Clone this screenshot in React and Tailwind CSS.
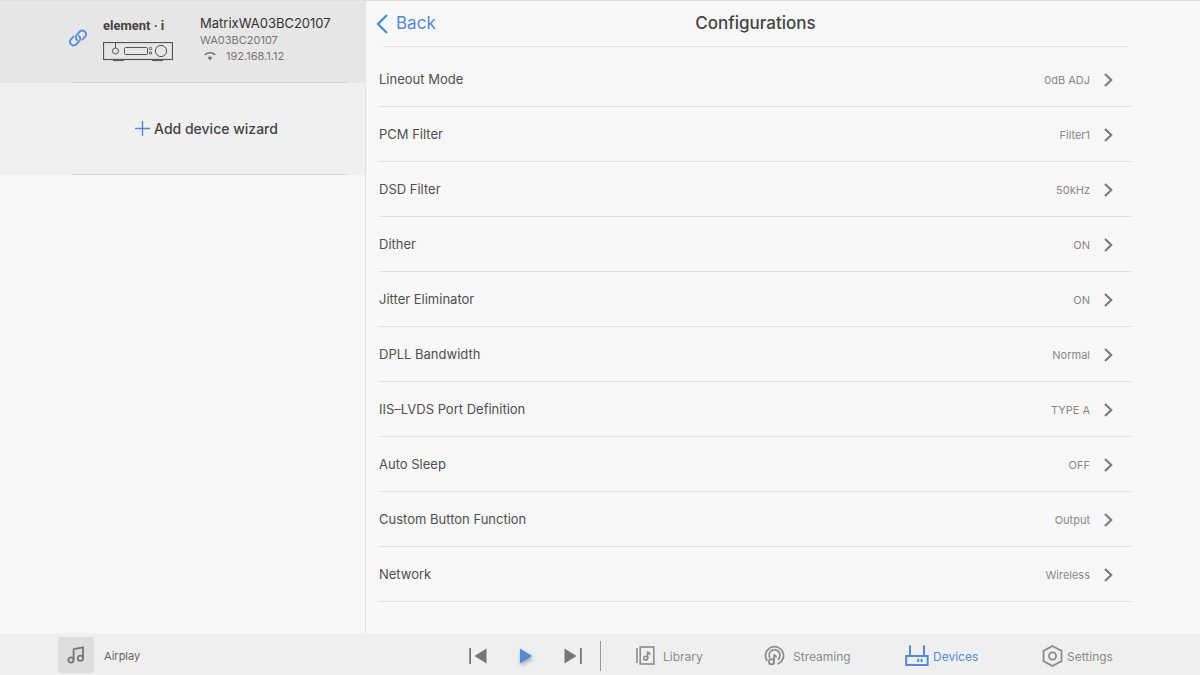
import { useState } from 'react';

const settings = [
  { label: 'Lineout Mode', value: '0dB ADJ' },
  { label: 'PCM Filter', value: 'Filter1' },
  { label: 'DSD Filter', value: '50kHz' },
  { label: 'Dither', value: 'ON' },
  { label: 'Jitter Eliminator', value: 'ON' },
  { label: 'DPLL Bandwidth', value: 'Normal' },
  { label: 'IIS–LVDS Port Definition', value: 'TYPE A' },
  { label: 'Auto Sleep', value: 'OFF' },
  { label: 'Custom Button Function', value: 'Output' },
  { label: 'Network', value: 'Wireless' },
];

const LinkIcon = () => (
  <svg width="20" height="20" viewBox="0 0 20 20" fill="none" stroke="#5f90de" strokeWidth="1.9" strokeLinecap="round">
    <path d="M9.2 12.2a3.7 3.7 0 0 1-.6-5.2l3.2-3.5a3.7 3.7 0 0 1 5.4 5l-2.6 2.9" />
    <path d="M10.800 7.800a3.700 3.700 0 0 1 .6 5.200l-3.200 3.500a3.700 3.700 0 0 1-5.400-5l2.600-2.900" />
  </svg>
);

const DeviceDrawing = () => (
  <svg width="70" height="20" viewBox="0 0 70 20" fill="none" stroke="#555" strokeWidth="1">
    <rect x="0.5" y="0.5" width="69" height="17" strokeWidth="1.2" />
    <path d="M12.5 1v5" />
    <circle cx="12.5" cy="9" r="3" />
    <rect x="21.5" y="5.500" width="23" height="7" rx="1" />
    <circle cx="47.5" cy="6.5" r="1.2" />
    <circle cx="47.5" cy="11" r="1.2" />
    <circle cx="58" cy="9" r="5.6" />
    <path d="M10 18.6h11M49 18.6h11" />
  </svg>
);

const WifiIcon = () => (
  <svg width="12" height="10" viewBox="0 0 12 10" fill="none" stroke="#777" strokeWidth="1.5">
    <path d="M.8 3.9a7.3 7.3 0 0 1 10.4 0" />
    <path d="M3.6 6.6a3.4 3.4 0 0 1 4.8 0L6 9.400z" fill="#777" stroke="none" />
  </svg>
);

const NoteIcon = () => (
  <svg width="18" height="18" viewBox="0 0 18 18" fill="none" stroke="#777" strokeWidth="1.8">
    <circle cx="4" cy="14" r="2.6" />
    <circle cx="13.4" cy="12.3" r="2.6" />
    <path d="M6.6 14V3.200L16 1.400v10.900" />
  </svg>
);

const LibraryIcon = () => (
  <svg width="19" height="19" viewBox="0 0 19 19" fill="none" stroke="currentColor" strokeWidth="1.6">
    <path d="M1 2v15" />
    <rect x="4.2" y="1" width="13.6" height="17" />
    <circle cx="9.700" cy="12.200" r="1.9" />
    <path d="M11.600 12.200V5.200M11.600 5.600c.3 1.700 2.200 1.200 2.400 3.200" />
  </svg>
);

const StreamingIcon = () => (
  <svg width="21" height="21" viewBox="0 0 21 21" fill="none" stroke="currentColor" strokeWidth="1.8" strokeLinecap="round">
    <path d="M2.8 15.200a9 9 0 1 1 11.400 3.600" />
    <path d="M5.600 12.300a5.400 5.400 0 1 1 8.800 1.700" />
    <circle cx="7.500" cy="16.800" r="2.600" />
    <path d="M10.100 16.800V9.400c.4 1.200 1.600 1.200 2 2.200" />
  </svg>
);

const DevicesIcon = () => (
  <svg width="24" height="21" viewBox="0 0 24 21" fill="none" stroke="currentColor" strokeWidth="2">
    <rect x="1.2" y="11" width="21.4" height="9" />
    <path d="M5 .5V11M19 .5V11" />
    <path d="M13.200 13.700v3.400M16.600 13.700v3.400" />
  </svg>
);

const SettingsIcon = () => (
  <svg width="21" height="22" viewBox="0 0 21 22" fill="none" stroke="currentColor" strokeWidth="1.8">
    <path d="M10.5 1l9 4.9v10.2l-9 4.9-9-4.9V5.9z" />
    <circle cx="10.5" cy="11" r="3.6" />
  </svg>
);

const tabs = [
  { name: 'Library', Icon: LibraryIcon, gap: 'gap-2' },
  { name: 'Streaming', Icon: StreamingIcon, gap: 'gap-2' },
  { name: 'Devices', Icon: DevicesIcon, gap: 'gap-1' },
  { name: 'Settings', Icon: SettingsIcon, gap: 'gap-1' },
];

const Sidebar = () => (
  <aside className="w-[366px] shrink-0 border-r border-[#e3e3e3]">
    <button className="block w-full bg-[#e6e6e6] pl-[68px] pr-[18px] text-left">
      <span className="flex h-[81px] items-start">
        <span className="mt-[27px] w-[35px]">
          <LinkIcon />
        </span>
        <span className="mt-[15px] flex w-[97px] flex-col gap-1.5">
          <span className="font-['Roboto'] text-[13px] leading-[20px] font-bold text-[#444]">element · i</span>
          <DeviceDrawing />
        </span>
        <span className="mt-[13px] flex flex-col">
          <span className="text-[13px] leading-[18px] text-[#333]">MatrixWA03BC20107</span>
          <span className="text-[11px] leading-[16px] text-[#777]">WA03BC20107</span>
          <span className="flex items-center gap-2.5 pl-1 text-[11px] leading-[16px] text-[#777]">
            <WifiIcon />
            192.168.1.12
          </span>
        </span>
      </span>
      <span className="ml-1 block border-b border-[#d3d3d3]" />
    </button>
    <button className="block w-full bg-[#f0f0f0] pl-[72px] pr-[18px]">
      <span className="flex h-[92px] items-center justify-center gap-1 border-b border-[#d6d6d6] pr-1.5 text-[14px] font-medium text-[#444]">
        <svg width="15" height="15" viewBox="0 0 15 15" stroke="#5489d6" strokeWidth="1.4">
          <path d="M7.5 0v15M0 7.5h15" />
        </svg>
        Add device wizard
      </span>
    </button>
  </aside>
);

const Configurations = () => (
  <main className="min-w-0 flex-1 pr-[69px] pl-[13px]">
    <header className="mr-[3px] ml-1 grid h-[46px] grid-cols-3 items-center border-b border-[#e0e0e0]">
      <button className="-ml-2 flex items-center gap-2 text-[17px] text-[#5489d6]">
        <svg width="13" height="20" viewBox="0 0 13 20" fill="none" stroke="currentColor" strokeWidth="2.4">
          <path d="M12 1L3 10l9 9" />
        </svg>
        Back
      </button>
      <h1 className="text-center text-[17px] font-medium text-[#444]">Configurations</h1>
    </header>
    <ul className="mt-[5px]">
      {settings.map((s) => (
        <li key={s.label}>
          <button className="flex h-[55px] w-full items-center border-b border-[#dedede] pt-0.5 pr-[18px] text-left">
            <span className="flex-1 text-[13px] text-[#505050]">{s.label}</span>
            <span className="text-[11px] text-[#888]">{s.value}</span>
            <svg className="ml-[14px]" width="9" height="14" viewBox="0 0 9 14" fill="none" stroke="#777" strokeWidth="2">
              <path d="M1 1l6.3 6L1 13" />
            </svg>
          </button>
        </li>
      ))}
    </ul>
  </main>
);

const PlayerBar = ({ active, onSelect }) => (
  <footer className="flex h-[41px] items-center bg-[#efefef] pl-[58px]">
    <div className="flex w-[411px] items-center gap-2.5">
      <div className="flex size-9 items-center justify-center rounded-xs bg-[#dedede]">
        <NoteIcon />
      </div>
      <span className="pt-1 text-[11px] text-[#666]">Airplay</span>
    </div>
    <div className="mt-0.5 flex w-[132px] items-center justify-between border-r border-[#999] py-[7px] pr-[18px]">
      <button aria-label="Previous">
        <svg width="18" height="16" viewBox="0 0 18 16" fill="#777">
          <path d="M.2 0h1.8v16H.2zM17.5.5v15L5.500 8z" />
        </svg>
      </button>
      <button aria-label="Play">
        <svg className="overflow-visible drop-shadow-[1px_2px_2px_#00000055]" width="14" height="16" viewBox="0 0 14 16" fill="#5489d6">
          <path d="M1 .5v15L13 8z" />
        </svg>
      </button>
      <button aria-label="Next">
        <svg width="18" height="16" viewBox="0 0 18 16" fill="#777">
          <path d="M.5.5v15l12-7.500zM16 0h1.800v16H16z" />
        </svg>
      </button>
    </div>
    <nav className="mt-0.5 ml-[35px] grid grid-cols-[128px_141px_137px_auto]">
      {tabs.map(({ name, Icon, gap }) => (
        <button
          key={name}
          onClick={() => onSelect(name)}
          className={`flex items-center text-[12px] ${gap} ${active === name ? 'text-[#5489d6]' : 'text-[#8c8c8c]'}`}
        >
          <Icon />
          <span className="pt-0.5">{name}</span>
        </button>
      ))}
    </nav>
  </footer>
);

const App = () => {
  const [active, setActive] = useState('Devices');

  return (
    <div className="flex min-h-screen flex-col border-t border-[#dfdfdf] bg-[#f7f7f7] font-['Inter',sans-serif]">
      <div className="flex flex-1">
        <Sidebar />
        <Configurations />
      </div>
      <PlayerBar active={active} onSelect={setActive} />
    </div>
  );
};

export default App;
